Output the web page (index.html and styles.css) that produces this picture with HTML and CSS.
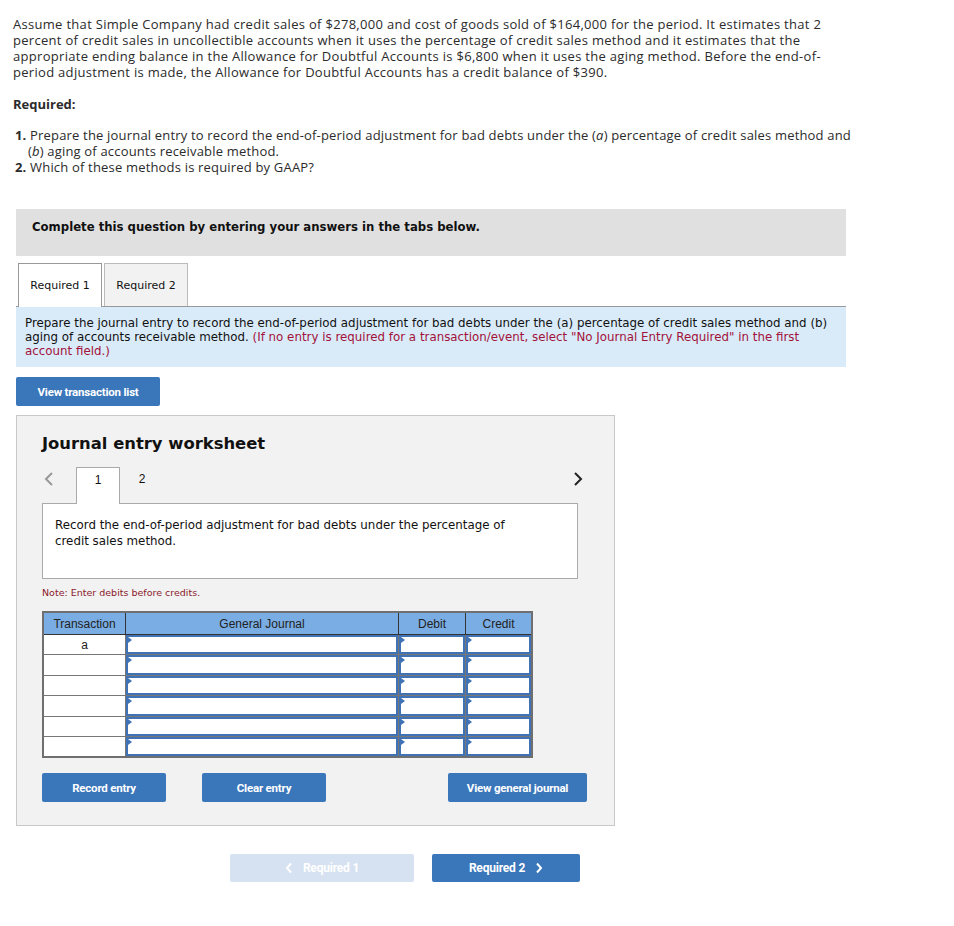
FILE: index.html
```html
<!DOCTYPE html>
<html lang="en">
<head>
    <meta charset="UTF-8">
    <title>Bad debts question</title>
    <link rel="stylesheet" href="styles.css">
</head>
<body>
    <div class="page">
        <p class="intro">Assume that Simple Company had credit sales of $278,000 and cost of goods sold of $164,000 for the period. It estimates that 2 percent of credit sales in uncollectible accounts when it uses the percentage of credit sales method and it estimates that the appropriate ending balance in the Allowance for Doubtful Accounts is $6,800 when it uses the aging method. Before the end-of-period adjustment is made, the Allowance for Doubtful Accounts has a credit balance of $390.</p>

        <p class="req-label">Required:</p>
        <ol class="req-list">
            <li><b>1.</b> Prepare the journal entry to record the end-of-period adjustment for bad debts under the (<i>a</i>) percentage of credit sales method and<br><span class="indent">(<i>b</i>) aging of accounts receivable method.</span></li>
            <li><b>2.</b> Which of these methods is required by GAAP?</li>
        </ol>

        <div class="quiz">
            <div class="quiz-head">Complete this question by entering your answers in the tabs below.</div>

            <div class="tabs">
                <div class="tab active">Required 1</div>
                <div class="tab">Required 2</div>
            </div>

            <div class="instructions">
                Prepare the journal entry to record the end-of-period adjustment for bad debts under the (a) percentage of credit sales method and (b) aging of accounts receivable method. <span class="hint">(If no entry is required for a transaction/event, select "No Journal Entry Required" in the first account field.)</span>
            </div>

            <button class="btn btn-list">View transaction list</button>

            <div class="worksheet">
                <h2 class="ws-title">Journal entry worksheet</h2>

                <div class="ws-nav">
                    <span class="arrow prev">
                        <svg width="10" height="16" viewBox="0 0 10 16"><path d="M8 2 L2 8 L8 14" fill="none" stroke="#999" stroke-width="2"/></svg>
                    </span>
                    <div class="ws-tab active">1</div>
                    <div class="ws-tab">2</div>
                    <span class="arrow next">
                        <svg width="10" height="16" viewBox="0 0 10 16"><path d="M2 2 L8 8 L2 14" fill="none" stroke="#222" stroke-width="2"/></svg>
                    </span>
                </div>

                <div class="ws-desc">
                    <p>Record the end-of-period adjustment for bad debts under the percentage of credit sales method.</p>
                </div>

                <p class="note">Note: Enter debits before credits.</p>

                <table class="journal">
                    <thead>
                        <tr>
                            <th class="c-tr">Transaction</th>
                            <th class="c-gj">General Journal</th>
                            <th class="c-dr">Debit</th>
                            <th class="c-cr">Credit</th>
                        </tr>
                    </thead>
                    <tbody>
                        <tr><td class="tr">a</td><td><div class="field"></div></td><td><div class="field"></div></td><td><div class="field"></div></td></tr>
                        <tr><td class="tr"></td><td><div class="field"></div></td><td><div class="field"></div></td><td><div class="field"></div></td></tr>
                        <tr><td class="tr"></td><td><div class="field"></div></td><td><div class="field"></div></td><td><div class="field"></div></td></tr>
                        <tr><td class="tr"></td><td><div class="field"></div></td><td><div class="field"></div></td><td><div class="field"></div></td></tr>
                        <tr><td class="tr"></td><td><div class="field"></div></td><td><div class="field"></div></td><td><div class="field"></div></td></tr>
                        <tr><td class="tr"></td><td><div class="field"></div></td><td><div class="field"></div></td><td><div class="field"></div></td></tr>
                    </tbody>
                </table>

                <div class="ws-actions">
                    <button class="btn btn-record">Record entry</button>
                    <button class="btn btn-clear">Clear entry</button>
                    <button class="btn btn-journal">View general journal</button>
                </div>
            </div>

            <div class="bottom-nav">
                <button class="btn btn-nav disabled">
                    <svg width="8" height="12" viewBox="0 0 8 12"><path d="M6 1.5 L2 6 L6 10.5" fill="none" stroke="#fff" stroke-width="2"/></svg>
                    Required 1
                </button>
                <button class="btn btn-nav">
                    Required 2
                    <svg width="8" height="12" viewBox="0 0 8 12"><path d="M2 1.5 L6 6 L2 10.5" fill="none" stroke="#fff" stroke-width="2"/></svg>
                </button>
            </div>
        </div>
    </div>
</body>
</html>
```

FILE: styles.css
```css
/* page base */
body {
  margin: 0;
  background: #fff;
  color: #2b2b2b;
  font-family: 'Open Sans', 'Liberation Sans', sans-serif;
}

.page {
  padding: 16px 13px 40px;
}

.intro {
  margin: 0;
  width: 826px;
  font-size: 13px;
  line-height: 16px;
  letter-spacing: 0.3px;
}

.req-label {
  margin: 16px 0 0;
  font-size: 13px;
  font-weight: 700;
  line-height: 16px;
}

.req-list {
  list-style: none;
  margin: 15px 0 0;
  padding: 0 0 0 2px;
  font-size: 13px;
  line-height: 16px;
  letter-spacing: 0.18px;
}

.req-list .indent {
  padding-left: 13px;
}

/* question block */
.quiz {
  margin: 34px 0 0 3px;
  width: 830px;
  font-family: 'DejaVu Sans', Verdana, sans-serif;
}

.quiz-head {
  background: #e0e0e0;
  height: 47px;
  box-sizing: border-box;
  padding: 11px 0 0 16px;
  font-size: 11.7px;
  font-weight: 700;
  color: #111;
}

.tabs {
  display: flex;
  gap: 2px;
  margin-top: 7px;
  padding-left: 2px;
}

.tab {
  width: 82px;
  height: 42px;
  display: flex;
  align-items: center;
  justify-content: center;
  font-size: 11px;
  color: #111;
  background: #f2f2f2;
  border: 1px solid #bbb;
  border-bottom: none;
}

.tab.active {
  background: #fff;
  border-color: #999;
  height: 43px;
  margin-bottom: -1px;
}

.instructions {
  background: #d9ebf9;
  border-top: 1px solid #999;
  padding: 9px 9px 9px;
  font-size: 11.85px;
  line-height: 14px;
  color: #111;
}

.hint {
  color: #a3123a;
}

/* buttons */
.btn {
  border: none;
  border-radius: 2px;
  background: #3a76ba;
  color: #fff;
  font-family: Roboto, 'Liberation Sans', sans-serif;
  font-weight: 700;
  font-size: 11.5px;
  letter-spacing: -0.2px;
  height: 29px;
  cursor: pointer;
}

.btn-list {
  margin-top: 10px;
  width: 144px;
}

/* worksheet */
.worksheet {
  margin-top: 9px;
  width: 572px;
  background: #f2f2f2;
  border: 1px solid #c8c8c8;
  padding: 0 0 23px 25px;
}

.ws-title {
  margin: 0;
  padding-top: 17px;
  font-size: 16.4px;
  font-weight: 700;
  color: #111;
  line-height: 22px;
}

.ws-nav {
  display: flex;
  align-items: flex-end;
  margin-top: 11px;
  width: 541px;
  height: 37px;
}

.arrow {
  display: flex;
  align-items: center;
  height: 24px;
  align-self: flex-start;
  margin-top: 1px;
}

.arrow.prev {
  margin-left: 2px;
  margin-right: 22px;
}

.arrow.next {
  margin-left: auto;
}

.ws-tab {
  width: 44px;
  height: 36px;
  box-sizing: border-box;
  padding-top: 5px;
  text-align: center;
  font-family: 'Liberation Sans', Arial, sans-serif;
  font-size: 12px;
  color: #111;
}

.ws-tab.active {
  background: #fff;
  border: 1px solid #aaa;
  border-bottom: none;
  margin-bottom: -1px;
  height: 37px;
}

.ws-desc {
  width: 510px;
  height: 60px;
  background: #fff;
  border: 1px solid #aaa;
  padding: 13px 12px 1px;
  font-size: 11.85px;
  line-height: 16px;
  color: #111;
}

.ws-desc p {
  margin: 0;
  max-width: 460px;
}

.note {
  margin: 8px 0 0;
  font-size: 9.5px;
  color: #8b1a2b;
}

/* journal table */
.journal {
  margin-top: 13px;
  border-collapse: collapse;
  border: 2px solid #6f6f6f;
  font-family: 'Liberation Sans', Arial, sans-serif;
  background: #fff;
}

.journal th {
  background: #7aade3;
  height: 21px;
  font-size: 12px;
  font-weight: 400;
  color: #222;
  border-right: 1px solid #333;
  border-bottom: 1px solid #333;
  padding: 0;
}

.journal .c-tr { width: 81px; }
.journal .c-gj { width: 272px; }
.journal .c-dr { width: 66px; }
.journal .c-cr { width: 65px; }

.journal td {
  height: 19.4px;
  padding: 0;
  border: 1px solid #777;
}

.journal td.tr {
  text-align: center;
  font-size: 12px;
  color: #222;
}

.field {
  position: relative;
  height: 15.4px;
  border: 2px solid #3f73b5;
  background: #fff;
}

.field::before {
  content: "";
  position: absolute;
  top: 0;
  left: 0;
  border-left: 4px solid #3f73b5;
  border-top: 3px solid transparent;
  border-bottom: 3px solid transparent;
}

.ws-actions {
  display: flex;
  margin-top: 15px;
}

.btn-record,
.btn-clear {
  width: 124px;
}

.btn-clear {
  margin-left: 36px;
}

.btn-journal {
  width: 139px;
  margin-left: 122px;
}

/* bottom navigation */
.bottom-nav {
  display: flex;
  gap: 18px;
  margin-top: 28px;
  padding-left: 214px;
}

.btn-nav {
  height: 28px;
  width: 148px;
  font-size: 12px;
  display: flex;
  align-items: center;
  justify-content: center;
  gap: 10px;
}

.btn-nav.disabled {
  width: 184px;
  background: #d6e2f1;
  cursor: default;
}
```
